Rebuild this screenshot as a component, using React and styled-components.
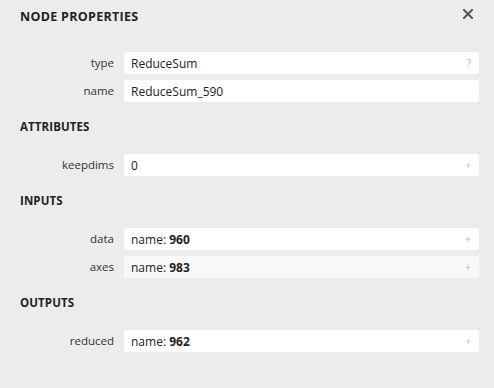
import React from 'react'
import styled, { createGlobalStyle } from 'styled-components';

const GlobalStyle = createGlobalStyle`
html, body {
  margin: 0;
  padding: 0;
  background-color: #ececec;
  font-family: "Open Sans", "Noto Sans", "DejaVu Sans", sans-serif;
  color: #333;
}
`;

const Panel = styled.div`
width: 494px;
height: 388px;
box-sizing: border-box;
padding: 0 15px 0 20px;
background-color: #ececec;
overflow: hidden;
`;

const TitleBar = styled.div`
display: flex;
align-items: center;
justify-content: space-between;
height: 32px;
`;

const Title = styled.h1`
margin: 0;
font-size: 12.5px;
font-weight: bold;
letter-spacing: 0.3px;
color: #222;
`;

const CloseButton = styled.button`
border: none;
background: none;
padding: 0;
margin: 0 6px 5px 0;
width: 10px;
height: 10px;
display: flex;
cursor: pointer;
`;

const Content = styled.div`
padding-top: 20px;
`;

const SectionTitle = styled.h2`
margin: 17px 0 19px 0;
font-size: 11.5px;
line-height: 16px;
font-weight: bold;
letter-spacing: 0.1px;
color: #222;
`;

const Rows = styled.div`
display: flex;
flex-direction: column;
gap: 6px;
`;

const Row = styled.div`
display: grid;
grid-template-columns: 94px 1fr;
column-gap: 10px;
align-items: center;
`;

const Label = styled.div`
text-align: right;
font-size: 11.5px;
color: #333;
padding-bottom: 2px;
`;

const Value = styled.div`
display: flex;
align-items: center;
justify-content: space-between;
height: 22px;
padding: 0 8px 0 7px;
border-radius: 3px;
background-color: ${p => (p.$muted ? '#f8f8f8' : '#fff')};
font-size: 12px;
color: #222;
`;

const Strong = styled.b`
font-weight: bold;
`;

const Hint = styled.span`
font-size: 10px;
color: #b4b4b4;
`;

const sections = [
  {
    title: 'ATTRIBUTES',
    rows: [{ label: 'keepdims', value: '0' }],
  },
  {
    title: 'INPUTS',
    rows: [
      { label: 'data', name: '960' },
      { label: 'axes', name: '983', muted: true },
    ],
  },
  {
    title: 'OUTPUTS',
    rows: [{ label: 'reduced', name: '962' }],
  },
];

function Item({ label, value, name, hint = '+', muted }) {
  return (
    <Row>
      <Label>{label}</Label>
      <Value $muted={muted}>
        <span>
          {name ? (
            <>
              name: <Strong>{name}</Strong>
            </>
          ) : (
            value
          )}
        </span>
        <Hint>{hint}</Hint>
      </Value>
    </Row>
  );
}

export default function App() {
  return (
    <Panel>
      <GlobalStyle />
      <TitleBar>
        <Title>NODE PROPERTIES</Title>
        <CloseButton aria-label="close">
          <svg width="10" height="10" viewBox="0 0 10 10">
            <path d="M1 1 L9 9 M9 1 L1 9" stroke="#555" strokeWidth="2" strokeLinecap="square" />
          </svg>
        </CloseButton>
      </TitleBar>
      <Content>
        <Rows>
          <Item label="type" value="ReduceSum" hint="?" />
          <Item label="name" value="ReduceSum_590" hint="" />
        </Rows>
        {sections.map(s => (
          <div key={s.title}>
            <SectionTitle>{s.title}</SectionTitle>
            <Rows>
              {s.rows.map(r => (
                <Item key={r.label} {...r} />
              ))}
            </Rows>
          </div>
        ))}
      </Content>
    </Panel>
  );
}
